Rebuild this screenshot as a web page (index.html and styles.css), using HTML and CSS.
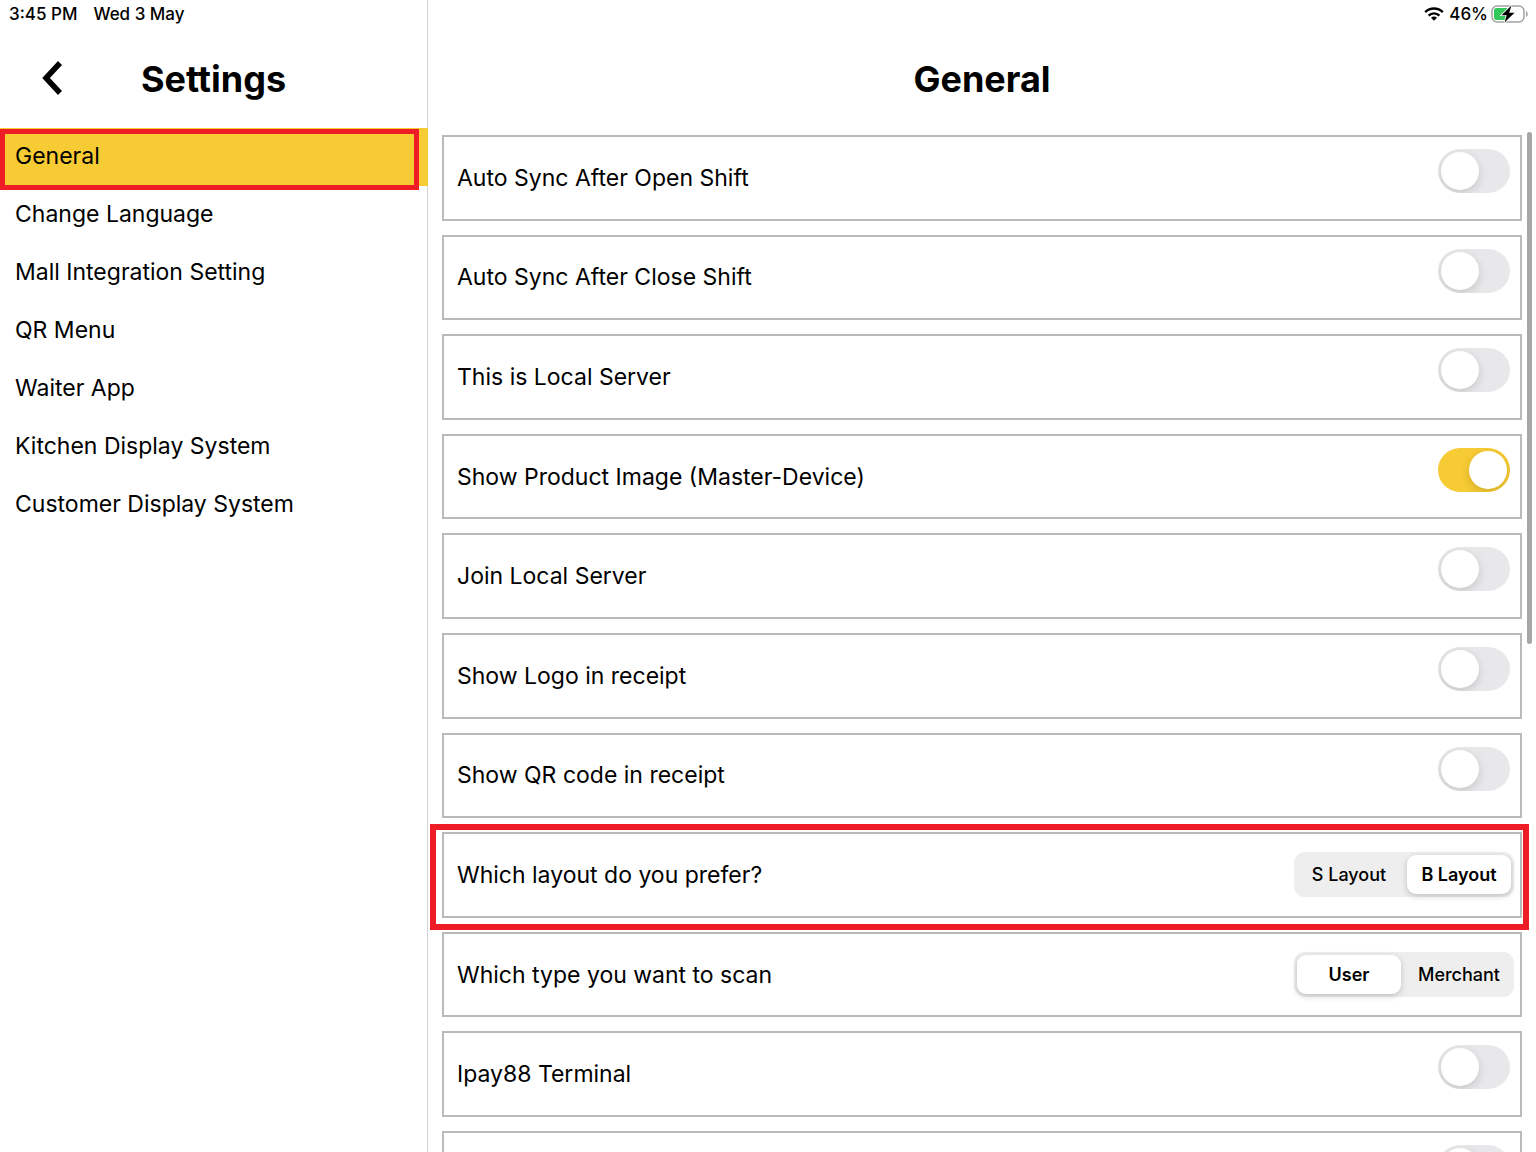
FILE: index.html
```html
<!DOCTYPE html>
<html lang="en">
<head>
  <meta charset="UTF-8">
  <meta name="viewport" content="width=device-width, initial-scale=1.0">
  <title>Settings</title>
  <link rel="stylesheet" href="styles.css">
</head>
<body>
<div class="app">
  <aside class="sidebar">
    <div class="status">
      <span>3:45 PM</span>
      <span>Wed 3 May</span>
    </div>
    <header class="header">
      <button type="button" class="back" aria-label="Back">
        <svg width="22" height="36" viewBox="0 0 22 36"><path d="M19 3 L5 18 L19 33" fill="none" stroke="#000" stroke-width="5.5"/></svg>
      </button>
      <h1>Settings</h1>
    </header>
    <nav class="menu">
      <a href="#general" class="active">General</a>
      <a href="#language">Change Language</a>
      <a href="#mall">Mall Integration Setting</a>
      <a href="#qr-menu">QR Menu</a>
      <a href="#waiter">Waiter App</a>
      <a href="#kitchen">Kitchen Display System</a>
      <a href="#customer">Customer Display System</a>
    </nav>
  </aside>

  <main class="content">
    <div class="status status-right">
      <svg class="wifi" width="20" height="14" viewBox="0 0 20 14">
        <g fill="none" stroke="#000" stroke-width="2.4">
          <path d="M1.2 5.2 C6.2 0.3 13.8 0.3 18.8 5.2"/>
          <path d="M4.6 8.6 C7.7 5.6 12.3 5.6 15.4 8.6"/>
        </g>
        <path d="M10 13.8 L7 10.8 C8.7 9.2 11.3 9.2 13 10.8 Z"/>
      </svg>
      <span>46%</span>
      <svg class="battery" width="38" height="18" viewBox="0 0 38 18">
        <rect x="1" y="1" width="32" height="16" rx="5" fill="#fff" stroke="#a3a3a3" stroke-width="1.5"/>
        <path d="M5.5 3 H16 V15 H5.5 A2.5 2.5 0 0 1 3 12.5 V5.5 A2.5 2.5 0 0 1 5.5 3 Z" fill="#34c759"/>
        <path d="M35 6 C37.3 7 37.3 11 35 12 Z" fill="#a3a3a3"/>
        <path d="M20.5 0.5 L10.5 10.3 H15.7 L13.5 17.5 L23.5 7.7 H18.2 Z" stroke="#fff" stroke-width="1.6" paint-order="stroke"/>
      </svg>
    </div>
    <header class="header">
      <h2>General</h2>
    </header>
    <div class="list">
      <div class="row">
        <label for="sync-open">Auto Sync After Open Shift</label>
        <input type="checkbox" class="switch" id="sync-open">
      </div>
      <div class="row">
        <label for="sync-close">Auto Sync After Close Shift</label>
        <input type="checkbox" class="switch" id="sync-close">
      </div>
      <div class="row">
        <label for="local-server">This is Local Server</label>
        <input type="checkbox" class="switch" id="local-server">
      </div>
      <div class="row">
        <label for="product-image">Show Product Image (Master-Device)</label>
        <input type="checkbox" class="switch" id="product-image" checked>
      </div>
      <div class="row">
        <label for="join-server">Join Local Server</label>
        <input type="checkbox" class="switch" id="join-server">
      </div>
      <div class="row">
        <label for="show-logo">Show Logo in receipt</label>
        <input type="checkbox" class="switch" id="show-logo">
      </div>
      <div class="row">
        <label for="show-qr">Show QR code in receipt</label>
        <input type="checkbox" class="switch" id="show-qr">
      </div>
      <div class="row marked" role="radiogroup" aria-labelledby="layout-title">
        <span id="layout-title">Which layout do you prefer?</span>
        <div class="segment">
          <label><input type="radio" name="layout" value="s">S Layout</label>
          <label><input type="radio" name="layout" value="b" checked>B Layout</label>
        </div>
      </div>
      <div class="row" role="radiogroup" aria-labelledby="scan-title">
        <span id="scan-title">Which type you want to scan</span>
        <div class="segment">
          <label><input type="radio" name="scan" value="user" checked>User</label>
          <label><input type="radio" name="scan" value="merchant">Merchant</label>
        </div>
      </div>
      <div class="row">
        <label for="ipay88">Ipay88 Terminal</label>
        <input type="checkbox" class="switch" id="ipay88">
      </div>
      <div class="row">
        <input type="checkbox" class="switch" aria-label="More">
      </div>
    </div>
    <div class="scrollbar"></div>
  </main>
</div>
</body>
</html>
```
FILE: styles.css
```css
* {
  box-sizing: border-box;
}

body {
  margin: 0;
  background: #fff;
  color: #000;
  font-family: Inter, "Liberation Sans", sans-serif;
  font-size: 23px;
  line-height: 30px;
}

.app {
  display: grid;
  grid-template-columns: 428px 1fr;
  height: 100vh;
}

.sidebar {
  border-right: 1px solid #d4d4d4;
}

.content {
  position: relative;
  display: flex;
  flex-direction: column;
  min-height: 0;
}

/* status bar */
.status {
  display: flex;
  align-items: center;
  gap: 16px;
  height: 28px;
  padding: 0 9px;
  font-size: 17px;
  font-weight: 500;
}

.status-right {
  justify-content: flex-end;
  gap: 5px;
  padding-right: 7px;
}

.battery {
  margin-left: -2px;
}

.header {
  position: relative;
  display: flex;
  align-items: center;
  justify-content: center;
  height: 100px;
  padding-top: 2px;
}

.header h1,
.header h2 {
  margin: 0;
  font-size: 36px;
  line-height: 44px;
  font-weight: 700;
}

.back {
  position: absolute;
  top: 32px;
  left: 41px;
  display: flex;
  padding: 0;
  border: none;
  background: none;
  cursor: pointer;
}

/* left menu */
.menu {
  display: flex;
  flex-direction: column;
}

.menu a {
  position: relative;
  padding: 13px 15px 15px;
  color: #000;
  text-decoration: none;
}

.menu .active {
  margin-right: -1px;
  background: #f7cb34;
}

.menu .active::after {
  content: "";
  position: absolute;
  top: 1px;
  right: 9px;
  bottom: -4px;
  left: 0;
  border: 5px solid #ee1c25;
}

/* ten full rows, the next one peeks in at the bottom */
.list {
  flex: 1;
  display: grid;
  grid-template-rows: repeat(10, 1fr) 21px;
  gap: 14px;
  min-height: 0;
  padding: 7px 14px 0;
  overflow: hidden;
}

.row {
  position: relative;
  display: flex;
  align-items: center;
  justify-content: space-between;
  min-height: 84px;
  padding: 0 6px 0 13px;
  border: 2px solid #bababa;
}

.marked::after {
  content: "";
  position: absolute;
  inset: -10px -9px -14px -14px;
  border: 6px solid #ee1c25;
  pointer-events: none;
}

.switch {
  appearance: none;
  align-self: flex-start;
  width: 72px;
  height: 44px;
  margin: 12px 4px 0 auto;
  padding: 3px;
  border-radius: 22px;
  background: #e8e8ea;
  overflow: hidden;
  cursor: pointer;
}

.switch::before {
  content: "";
  display: block;
  width: 38px;
  height: 38px;
  border-radius: 50%;
  background: #fff;
  box-shadow: 0 3px 10px rgba(0, 0, 0, 0.15);
}

.switch:checked {
  background: #f7cb34;
}

.switch:checked::before {
  margin-left: auto;
}

.segment {
  display: grid;
  grid-template-columns: 1fr 1fr;
  gap: 6px;
  width: 220px;
  padding: 3px;
  border-radius: 11px;
  background: #eee;
  font-size: 18px;
  font-weight: 500;
}

.segment label {
  padding: 5px 0;
  border-radius: 9px;
  line-height: 29px;
  text-align: center;
  cursor: pointer;
}

.segment label:has(:checked) {
  background: #fff;
  box-shadow: 0 2px 6px rgba(0, 0, 0, 0.2);
  font-weight: 600;
}

.segment input {
  position: absolute;
  opacity: 0;
}

.scrollbar {
  position: absolute;
  top: 132px;
  right: 4px;
  width: 5px;
  height: 512px;
  border-radius: 3px;
  background: #a6a6a6;
}
```
